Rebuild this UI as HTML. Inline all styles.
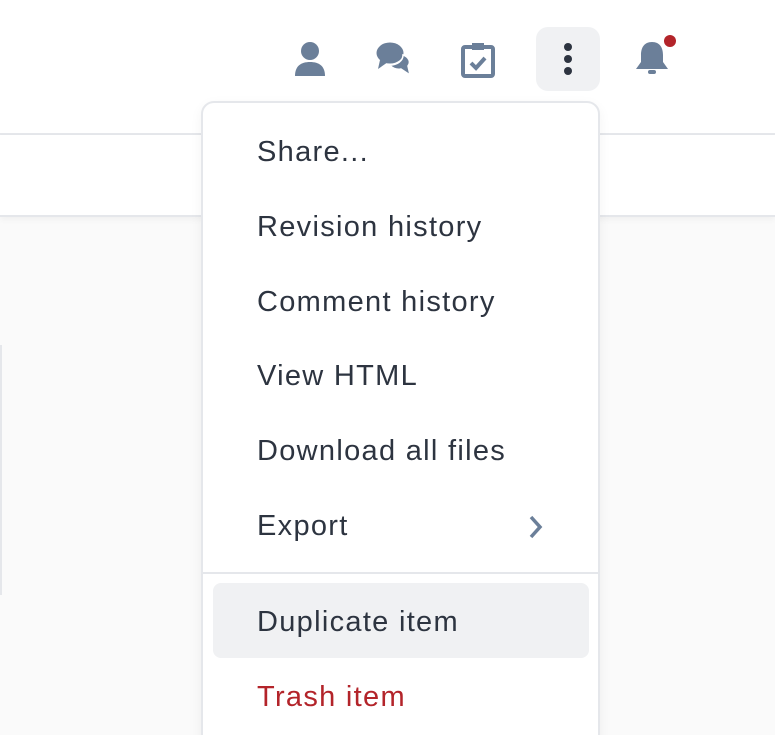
<!DOCTYPE html>
<html><head><meta charset="utf-8"><style>
*{margin:0;padding:0;box-sizing:border-box}
html,body{width:775px;height:735px;overflow:hidden}
body{background:#fafafa;font-family:"Liberation Sans",sans-serif;position:relative}
.hdr{position:absolute;left:0;top:0;width:775px;height:135px;background:#fff;border-bottom:2px solid #e5e7eb}
.band{position:absolute;left:0;top:135px;width:775px;height:82px;background:#fff;border-bottom:2px solid #e5e7eb;box-shadow:0 3px 6px rgba(0,0,0,.04)}
.vl{position:absolute;left:0;top:345px;width:2px;height:250px;background:#e5e7eb}
.menu{position:absolute;left:201px;top:101px;width:399px;height:660px;background:#fff;border:2px solid #e5e7eb;border-radius:13px;box-shadow:0 4px 12px rgba(0,0,0,.05)}
.it{position:absolute;left:54px;font-size:29px;color:#2d3440;letter-spacing:1.3px;line-height:30px;white-space:nowrap}
.sep{position:absolute;left:0;right:0;top:469px;height:2px;background:#e5e7eb}
.hl{position:absolute;left:10px;top:480px;width:376px;height:75px;background:#f0f1f3;border-radius:8px}
.kb{position:absolute;left:536px;top:27px;width:64px;height:64px;background:#f0f1f3;border-radius:12px}
.dot{position:absolute;left:564px;width:8px;height:8px;border-radius:50%;background:#2d3440}
</style></head><body>
<div class="hdr"></div>
<div class="band"></div>
<div class="vl"></div>
<svg style="position:absolute;left:294px;top:41px" width="32" height="35" viewBox="0 0 32 35"><circle cx="16" cy="10" r="9" fill="#6b7f99"/><path d="M1 35 C1 25 7 21 16 21 C25 21 31 25 31 35 Z" fill="#6b7f99"/></svg>
<svg style="position:absolute;left:375px;top:40px" width="40" height="40" viewBox="0 0 40 40"><ellipse cx="15" cy="13" rx="13.5" ry="10.5" fill="#6b7f99"/><path d="M5 20 L3 29 L13 22Z" fill="#6b7f99"/><path d="M28 15 C34 17 36 22 33 26 L35 35 L26 29 C21 30 17 28 15 25 C22 25 28 21 28 15Z" fill="#6b7f99" stroke="#fff" stroke-width="1.5"/></svg>
<svg style="position:absolute;left:461px;top:42px" width="34" height="36" viewBox="0 0 34 36"><rect x="2" y="5" width="30" height="29" rx="2" fill="none" stroke="#6b7f99" stroke-width="4"/><rect x="11" y="1" width="12" height="7" fill="#6b7f99"/><path d="M10 21 L15 26 L24 16" fill="none" stroke="#6b7f99" stroke-width="4"/></svg>
<div class="kb"></div>
<div class="dot" style="top:43px"></div><div class="dot" style="top:55px"></div><div class="dot" style="top:67px"></div>
<svg style="position:absolute;left:634px;top:40px" width="36" height="38" viewBox="0 0 36 38"><path d="M18 2 C10 2 7 8 7 15 L7 22 L2 29 L34 29 L29 22 L29 15 C29 8 26 2 18 2Z" fill="#6b7f99"/><rect x="14" y="30" width="8" height="4" rx="2" fill="#6b7f99"/></svg>
<div style="position:absolute;left:664px;top:35px;width:12px;height:12px;border-radius:50%;background:#b3242a"></div>
<div class="menu">
<div class="it" style="top:34px">Share...</div>
<div class="it" style="top:109px">Revision history</div>
<div class="it" style="top:184px">Comment history</div>
<div class="it" style="top:258px">View HTML</div>
<div class="it" style="top:333px">Download all files</div>
<div class="it" style="top:408px">Export</div>
<svg style="position:absolute;left:324px;top:411px" width="18" height="26" viewBox="0 0 18 26"><path d="M4 3 L13 13 L4 23" fill="none" stroke="#6b7f99" stroke-width="3.5"/></svg>
<div class="sep"></div>
<div class="hl"></div>
<div class="it" style="top:504px">Duplicate item</div>
<div class="it" style="top:579px;color:#b3242a">Trash item</div>
</div>
</body></html>
